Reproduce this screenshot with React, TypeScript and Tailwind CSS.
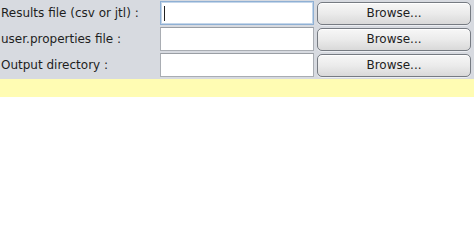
import React from "react";

const rows = [
  { label: "Results file (csv or jtl) :", focused: true },
  { label: "user.properties file :", focused: false },
  { label: "Output directory :", focused: false },
];

export default function App() {
  return (
    <div
      className="w-[474px] h-[248px] bg-white text-[12px] text-[#1e1e1e]"
      style={{ fontFamily: '"DejaVu Sans", sans-serif' }}
    >
      <div className="bg-[#d7dae0] pb-[1px]">
        {rows.map((r) => (
          <div key={r.label} className="flex h-[26px] items-start">
            <div className="w-[160px] h-[26px] leading-[26px] pl-[1px] whitespace-nowrap">
              {r.label}
            </div>
            {r.focused ? (
              <div className="mt-[1px] w-[154px] h-[24px] border border-[#8fb0d4] bg-white shadow-[inset_0_0_0_1px_#c4d6ea] flex items-center pl-[3px]">
                <div className="w-[1px] h-[15px] bg-[#222]" />
              </div>
            ) : (
              <div className="mt-[1px] w-[154px] h-[24px] border border-[#a9adb3] border-t-[#9a9ea4] bg-white" />
            )}
            <button className="ml-[3px] mt-[2px] w-[154px] h-[23px] rounded-[5px] border border-[#767b82] bg-gradient-to-b from-[#f7f7f7] via-[#ebebeb] to-[#d9d9d9] text-[12px] text-[#1e1e1e] leading-[21px] shadow-[inset_0_1px_0_#ffffff,0_1px_0_#eceef2]">
              Browse...
            </button>
          </div>
        ))}
      </div>
      <div className="h-[18px] bg-[#fffcb3]" />
    </div>
  );
}
